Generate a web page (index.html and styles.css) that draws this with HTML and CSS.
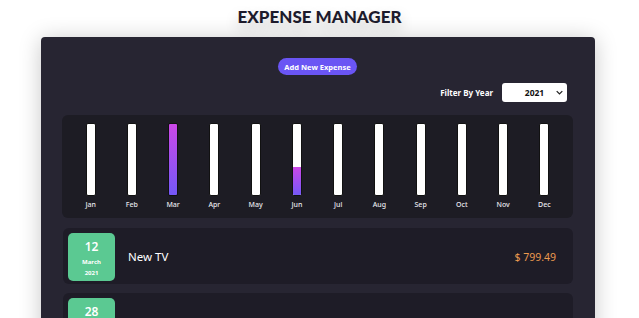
FILE: index.html
```html
<!DOCTYPE html>
<html>
<head>
<meta charset="utf-8">
<link rel="stylesheet" href="styles.css">
</head>
<body>
<h1 class="title">EXPENSE MANAGER</h1>
<main class="card">
  <div class="add-row"><button class="add-btn">Add New Expense</button></div>
  <div class="filter-row">
    <label class="filter-label">Filter By Year</label>
    <div class="select"><span>2021</span>
      <svg class="chev" viewBox="0 0 10 6" width="7" height="5"><path d="M1 1l4 4 4-4" fill="none" stroke="#222" stroke-width="1.8"/></svg>
    </div>
  </div>
  <section class="chart">
    <div class="col"><div class="bar"></div><span>Jan</span></div>
    <div class="col"><div class="bar"></div><span>Feb</span></div>
    <div class="col"><div class="bar"><div class="fill" style="height:100%"></div></div><span>Mar</span></div>
    <div class="col"><div class="bar"></div><span>Apr</span></div>
    <div class="col"><div class="bar"></div><span>May</span></div>
    <div class="col"><div class="bar"><div class="fill" style="height:40%"></div></div><span>Jun</span></div>
    <div class="col"><div class="bar"></div><span>Jul</span></div>
    <div class="col"><div class="bar"></div><span>Aug</span></div>
    <div class="col"><div class="bar"></div><span>Sep</span></div>
    <div class="col"><div class="bar"></div><span>Oct</span></div>
    <div class="col"><div class="bar"></div><span>Nov</span></div>
    <div class="col"><div class="bar"></div><span>Dec</span></div>
  </section>
  <ul class="list">
    <li class="item">
      <div class="date"><span class="day">12</span><span class="month">March</span><span class="year">2021</span></div>
      <span class="name">New TV</span>
      <span class="amount">$ 799.49</span>
    </li>
    <li class="item">
      <div class="date"><span class="day">28</span><span class="month">February</span><span class="year">2021</span></div>
      <span class="name">Car Insurance</span>
      <span class="amount">$ 294.67</span>
    </li>
  </ul>
</main>
</body>
</html>
```
FILE: styles.css
```css
html, body { margin: 0; padding: 0; background: #fff; }
body { font-family: "Noto Sans", "Open Sans", sans-serif; overflow: hidden; height: 318px; }
.title {
  margin: 0;
  padding-top: 7px;
  height: 30px;
  line-height: 20px;
  font-family: Lato, "Noto Sans", sans-serif;
  font-size: 17px;
  font-weight: 900;
  text-align: center;
  color: #1d1b2c;
  text-shadow: 0 6px 14px rgba(0,0,0,0.22);
}
.card {
  margin: 0 44px 0 41px;
  background: #272532;
  border-radius: 4px;
  padding: 21px 22px 20px 21px;
  box-shadow: 0 2px 22px rgba(0,0,0,0.22);
  height: 400px;
  box-sizing: border-box;
}
.add-row { display: flex; justify-content: center; }
.add-btn {
  border: none;
  background: #6a55f4;
  color: #fff;
  font-family: inherit;
  font-weight: 700;
  font-size: 7.5px;
  height: 17px;
  width: 79px;
  padding: 0;
  border-radius: 9px;
}
.filter-row {
  display: flex;
  justify-content: flex-end;
  align-items: center;
  gap: 9px;
  margin-top: 8px;
  padding-right: 6px;
}
.filter-label { color: #fff; font-weight: 700; font-size: 8px; }
.select {
  width: 65px;
  height: 19px;
  box-sizing: border-box;
  background: #fff;
  border-radius: 3px;
  display: flex;
  align-items: center;
  justify-content: center;
  position: relative;
  font-size: 8.5px;
  font-weight: 700;
  color: #111;
}
.chev { position: absolute; right: 4px; top: 7px; }
.chart {
  margin-top: 13px;
  background: #1d1c24;
  border-radius: 6px;
  height: 103px;
  box-sizing: border-box;
  padding: 8px 8px 0 8px;
  display: flex;
}
.col {
  flex: 1;
  display: flex;
  flex-direction: column;
  align-items: center;
}
.bar {
  width: 10px;
  height: 73px;
  box-sizing: border-box;
  background: #fff;
  border: 1px solid #111;
  border-radius: 2px;
  display: flex;
  flex-direction: column;
  justify-content: flex-end;
  overflow: hidden;
}
.fill { background: linear-gradient(to bottom, #cc48e8, #7458f6); width: 100%; }
.col span { color: #e8e8ee; font-size: 7px; font-weight: 500; margin-top: 4px; }
.list { list-style: none; margin: 10px 0 0 1px; padding: 0; display: flex; flex-direction: column; gap: 9px; }
.item {
  background: #1e1c27;
  border-radius: 6px;
  height: 56px;
  box-sizing: border-box;
  padding: 4px 17px 3px 5px;
  display: flex;
  align-items: center;
}
.date {
  width: 47px;
  height: 48px;
  background: #5bc992;
  border-radius: 5px;
  display: flex;
  flex-direction: column;
  align-items: center;
  color: #fff;
  box-sizing: border-box;
  padding-top: 6px;
}
.day { font-size: 12px; font-weight: 600; line-height: 16px; }
.month { font-size: 6px; font-weight: 700; line-height: 8px; margin-top: 3px; }
.year { font-size: 6px; font-weight: 700; line-height: 8px; margin-top: 3px; }
.name { color: #fff; font-size: 11.5px; margin-left: 13px; flex: 1; }
.amount { color: #ec9a4f; font-size: 10.5px; }
```
